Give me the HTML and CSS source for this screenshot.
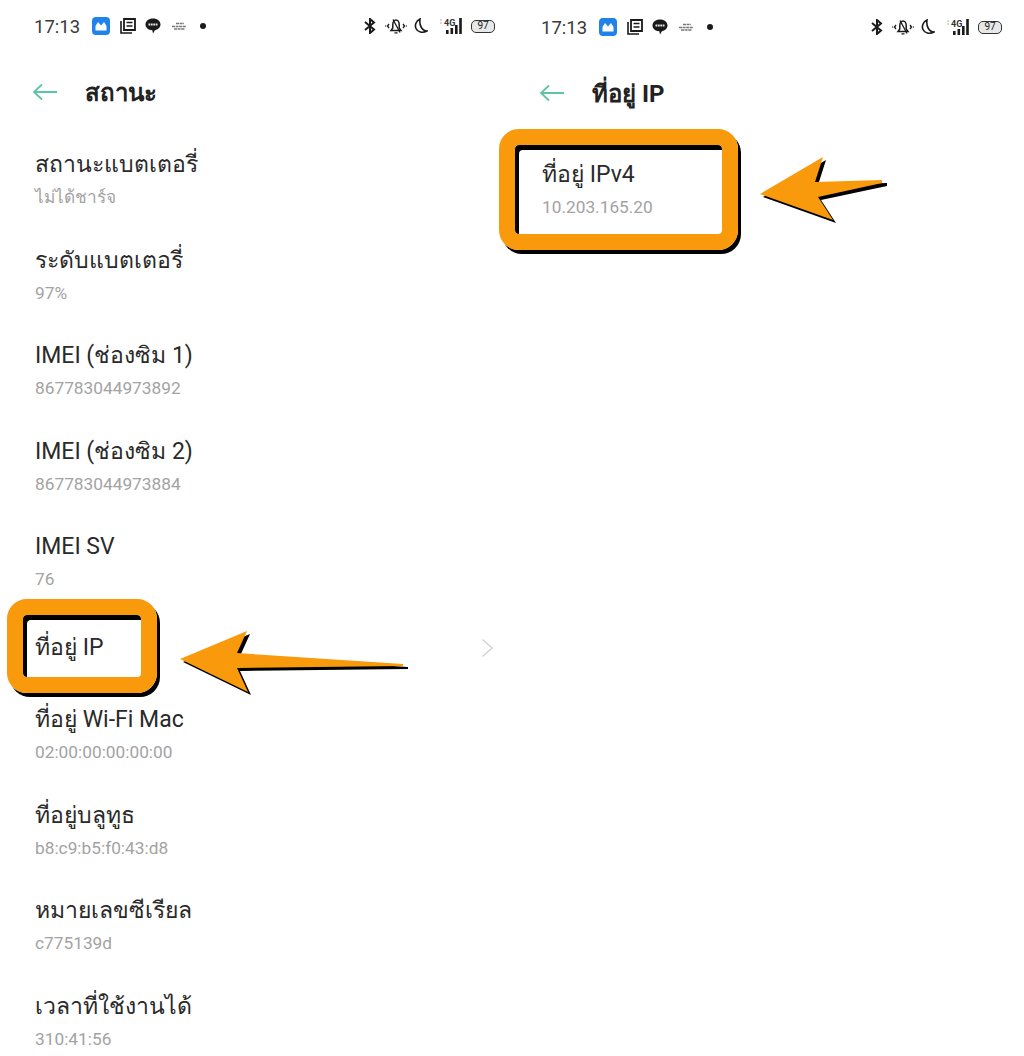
FILE: index.html
```html
<!DOCTYPE html>
<html lang="th">
<head>
	<meta charset="UTF-8">
	<title>ที่อยู่ IP</title>
	<link rel="stylesheet" href="styles.css">
</head>
<body>

	<svg class="defs" width="0" height="0">
		<symbol id="appCloud" viewBox="0 0 18 18">
			<rect width="18" height="18" rx="4" fill="#1f83ea"/>
			<path d="M3.500 13.500V9L6 5h6l2.500 4v4.500z" fill="#fff"/>
			<path d="M6 5l3 3.500L12 5z" fill="#1f83ea"/>
		</symbol>
		<symbol id="appBook" viewBox="0 0 16 16">
			<path d="M1 3v12h11" fill="none" stroke="#1a1a1a" stroke-width="1.600"/>
			<path d="M4 1h11v11H4z" fill="none" stroke="#1a1a1a" stroke-width="1.800"/>
			<path d="M6.500 4.500h6M6.500 8h6" stroke="#1a1a1a" stroke-width="1.600"/>
		</symbol>
		<symbol id="appLine" viewBox="0 0 16 16">
			<path d="M8 0.500c4.400 0 7.500 2.600 7.500 6 0 3-2.700 5.300-5.600 5.800L8 15.500l-.7-3.200C3.300 12 .5 9.600.5 6.500c0-3.400 3.100-6 7.500-6z" fill="#1a1a1a"/>
			<path d="M3.500 6.500h9" stroke="#e8e8e8" stroke-width="2" stroke-dasharray="1.800 .6"/>
		</symbol>
		<symbol id="appSmall" viewBox="0 0 16 8">
			<path d="M5 1.500h8M1 4.500h14M3 7h11" stroke="#777" stroke-width="1.300" stroke-dasharray="3 .6"/>
		</symbol>
		<symbol id="icBluetooth" viewBox="0 0 12 16">
			<path d="M1 4l9 7.500-4 3.500V1l4 3.500L1 12" fill="none" stroke="#1a1a1a" stroke-width="2"/>
		</symbol>
		<symbol id="icMute" viewBox="0 0 22 16">
			<path d="M6 12.500h10l-1.800-2.500V6.500c0-2.500-1.500-4.500-3.200-4.500S7.800 4 7.800 6.500V10z" fill="none" stroke="#1a1a1a" stroke-width="1.500"/>
			<path d="M9.500 14.800h3M8 1.500l7 13" stroke="#1a1a1a" stroke-width="1.300"/>
			<path d="M4 6 2.500 8 4 10M18 6l1.500 2L18 10" fill="none" stroke="#1a1a1a" stroke-width="1.300"/>
			<path d="M0 8h1.200M20.800 8H22" stroke="#555" stroke-width="1.500"/>
		</symbol>
		<symbol id="icMoon" viewBox="0 0 14 16">
			<path d="M6 1C2 3 .5 7 2 10.500c1.500 3.500 6.500 5 11 2.500C8 13 5 7 6 1z" fill="none" stroke="#1a1a1a" stroke-width="1.600"/>
		</symbol>
		<symbol id="icBars" viewBox="0 0 22 18">
			<path d="M0 3h2M0 6h2" stroke="#ccc" stroke-width="1.500"/>
			<rect x="6" y="13" width="2.600" height="4" fill="#1a1a1a"/>
			<rect x="10.500" y="11" width="2.600" height="6" fill="#1a1a1a"/>
			<rect x="15" y="8" width="2.600" height="9" fill="#1a1a1a"/>
			<rect x="19.200" y="1" width="2.600" height="16" fill="#1a1a1a"/>
		</symbol>
	</svg>

	<div class="page">
		<section class="screen">
			<div class="statusBar">
				<span class="time">17:13</span>
				<svg class="icon iconCloud"><use href="#appCloud"/></svg>
				<svg class="icon iconBook"><use href="#appBook"/></svg>
				<svg class="icon iconLine"><use href="#appLine"/></svg>
				<svg class="icon iconSmall"><use href="#appSmall"/></svg>
				<span class="dot"></span>
				<div class="statusRight">
					<svg class="icon iconBt"><use href="#icBluetooth"/></svg>
					<svg class="icon iconMute"><use href="#icMute"/></svg>
					<svg class="icon iconMoon"><use href="#icMoon"/></svg>
					<svg class="icon iconSignal" viewBox="0 0 22 18"><use href="#icBars"/><text class="netType" x="4" y="9">4G</text></svg>
					<span class="battery">97</span>
				</div>
			</div>
			<header class="titleBar">
				<svg class="back" viewBox="0 0 26 18"><path d="M25 9H2M10 1.500 2 9l8 7.500" fill="none" stroke="#5cc6a0" stroke-width="1.800"/></svg>
				<h1>สถานะ</h1>
			</header>
			<ul class="list">
				<li class="row"><p class="name">สถานะแบตเตอรี่</p><p class="value">ไม่ได้ชาร์จ</p></li>
				<li class="row"><p class="name">ระดับแบตเตอรี่</p><p class="value">97%</p></li>
				<li class="row"><p class="name">IMEI (ช่องซิม 1)</p><p class="value">867783044973892</p></li>
				<li class="row"><p class="name">IMEI (ช่องซิม 2)</p><p class="value">867783044973884</p></li>
				<li class="row"><p class="name">IMEI SV</p><p class="value">76</p></li>
				<li class="row rowLink">
					<p class="name">ที่อยู่ IP</p>
					<svg class="chevron" viewBox="0 0 13 20"><path d="M1.500 1.500 11 10l-9.500 8.500" fill="none" stroke="#d4d4d4" stroke-width="1.600"/></svg>
				</li>
				<li class="row"><p class="name">ที่อยู่ Wi-Fi Mac</p><p class="value">02:00:00:00:00:00</p></li>
				<li class="row"><p class="name">ที่อยู่บลูทูธ</p><p class="value">b8:c9:b5:f0:43:d8</p></li>
				<li class="row"><p class="name">หมายเลขซีเรียล</p><p class="value">c775139d</p></li>
				<li class="row"><p class="name">เวลาที่ใช้งานได้</p><p class="value">310:41:56</p></li>
			</ul>
		</section>

		<section class="screen screenRight">
			<div class="statusBar">
				<span class="time">17:13</span>
				<svg class="icon iconCloud"><use href="#appCloud"/></svg>
				<svg class="icon iconBook"><use href="#appBook"/></svg>
				<svg class="icon iconLine"><use href="#appLine"/></svg>
				<svg class="icon iconSmall"><use href="#appSmall"/></svg>
				<span class="dot"></span>
				<div class="statusRight">
					<svg class="icon iconBt"><use href="#icBluetooth"/></svg>
					<svg class="icon iconMute"><use href="#icMute"/></svg>
					<svg class="icon iconMoon"><use href="#icMoon"/></svg>
					<svg class="icon iconSignal" viewBox="0 0 22 18"><use href="#icBars"/><text class="netType" x="4" y="9">4G</text></svg>
					<span class="battery">97</span>
				</div>
			</div>
			<header class="titleBar">
				<svg class="back" viewBox="0 0 26 18"><path d="M25 9H2M10 1.500 2 9l8 7.500" fill="none" stroke="#5cc6a0" stroke-width="1.800"/></svg>
				<h1>ที่อยู่ IP</h1>
			</header>
			<ul class="list">
				<li class="row"><p class="name">ที่อยู่ IPv4</p><p class="value">10.203.165.20</p></li>
			</ul>
		</section>
	</div>

	<!-- hand drawn markup that sits on top of the screenshots -->
	<div class="frame frameLeft"></div>
	<div class="frame frameRight"></div>
	<svg class="arrows" viewBox="0 0 1024 1056">
		<polygon class="arrowShadow" points="183,662 250,634 240,656 408,667 408,669 240,671 251,695"/>
		<polygon class="arrowFill" points="180,659 247,631 237,653 403,664 403,666 237,668 248,692"/>
		<polygon class="arrowShadow" points="763,197 826,160 818,185 887,183 887,186 821,200 836,223"/>
		<polygon class="arrowFill" points="760,194 823,157 815,182 882,180 882,183 818,197 833,220"/>
	</svg>

</body>
</html>
```

FILE: styles.css
```css
*{
	margin: 0;
	padding: 0;
	list-style: none;
	box-sizing: border-box;
}
body{
	background: #fff;
	font-family: Roboto, "Noto Sans", "DejaVu Sans", sans-serif;
	color: #222;
}
.defs{
	position: absolute;
}
.page{
	display: flex;
	width: 1024px;
	height: 1056px;
	overflow: hidden;
}
.screen{
	width: 507px;
	flex-shrink: 0;
	padding-left: 34px;
}
.screenRight{
	padding-top: 1px;
}

/* status bar */
.statusBar{
	display: flex;
	align-items: center;
	height: 18px;
	margin-top: 17px;
	width: 461px;
}
.time{
	width: 58px;
	padding-top: 1px;
	font-size: 18.500px;
	color: #3a3a3a;
}
.icon{
	flex-shrink: 0;
}
.iconCloud{
	width: 18px;
	height: 18px;
}
.iconBook{
	width: 16px;
	height: 16px;
	margin-left: 10px;
}
.iconLine{
	width: 16px;
	height: 16px;
	margin-left: 9px;
}
.iconSmall{
	width: 16px;
	height: 8px;
	margin-left: 10px;
}
.dot{
	width: 6px;
	height: 6px;
	margin-left: 13px;
	border-radius: 50%;
	background: #1a1a1a;
}
.statusRight{
	display: flex;
	align-items: center;
	margin-left: auto;
}
.iconBt{
	width: 12px;
	height: 16px;
}
.iconMute{
	width: 22px;
	height: 16px;
	margin-left: 9px;
}
.iconMoon{
	width: 14px;
	height: 16px;
	margin-left: 7px;
}
.iconSignal{
	width: 22px;
	height: 18px;
	margin-left: 12px;
}
.netType{
	font-size: 9px;
	font-weight: 700;
	fill: #333;
}
.battery{
	width: 24px;
	height: 13px;
	margin-left: 9px;
	border: 1.500px solid #333;
	border-radius: 5px;
	background: #e8e8e8;
	font-size: 10px;
	line-height: 10px;
	text-align: center;
}

/* title */
.titleBar{
	display: flex;
	align-items: center;
	height: 40px;
	margin-top: 37px;
}
.back{
	width: 26px;
	height: 18px;
	margin-left: -2px;
}
h1{
	margin-left: 27px;
	font-size: 24px;
	font-weight: 700;
	color: #222;
}

/* rows */
.list{
	margin-top: 31px;
	margin-left: 1px;
}
.screenRight .list{
	margin-top: 40px;
}
.row{
	height: 95.500px;
	padding-top: 6px;
}
.name{
	font-size: 23px;
	line-height: 32px;
	color: #2a2a2a;
}
.value{
	font-size: 17.300px;
	line-height: 32px;
	color: #a3a3a3;
}
.rowLink{
	display: flex;
	align-items: center;
	justify-content: space-between;
	height: 77.500px;
	padding-top: 0;
	padding-bottom: 22.500px;
	padding-right: 13px;
}
.chevron{
	width: 13px;
	height: 20px;
}

/* orange markup */
.frame{
	position: absolute;
	border: 16px solid #f99a0c;
	border-radius: 20px;
	box-shadow: 3px 4px 0 #000, inset 4px 5px 0 #000;
}
.frameLeft{
	left: 7px;
	top: 599px;
	width: 150px;
	height: 94px;
}
.frameRight{
	left: 499px;
	top: 129px;
	width: 239px;
	height: 121px;
}
.arrows{
	position: absolute;
	left: 0;
	top: 0;
	width: 1024px;
	height: 1056px;
}
.arrowShadow{
	fill: #000;
}
.arrowFill{
	fill: #f99a0c;
}
```
